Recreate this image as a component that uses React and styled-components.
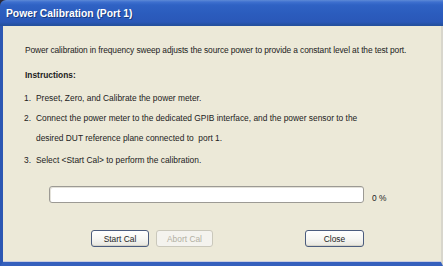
import React from "react";
import styled, { createGlobalStyle } from "styled-components";

const Global = createGlobalStyle`
  html, body { margin: 0; padding: 0; background: #2a2a3a; }
  body { width: 443px; height: 266px; overflow: hidden; }
`;

const Window = styled.div`
  width: 443px;
  height: 266px;
  display: flex;
  flex-direction: column;
  font-family: "Liberation Sans", Arial, sans-serif;
  overflow: hidden;
`;

const TitleBar = styled.div`
  height: 26px;
  flex: none;
  display: flex;
  align-items: center;
  padding-left: 6px;
  box-sizing: border-box;
  border-top-left-radius: 6px;
  background: linear-gradient(
    to bottom,
    #5d8ad6 0px,
    #3e70cf 2px,
    #2f62c4 5px,
    #2b5cbd 14px,
    #2a58b8 22px,
    #24509f 25px,
    #24509f 26px
  );
`;

const Title = styled.span`
  color: #ffffff;
  font-weight: bold;
  font-size: 10.3px;
  text-shadow: 1px 1px 0 #1a3c80;
  margin-top: 1px;
`;

const Body = styled.div`
  flex: 1;
  display: flex;
  flex-direction: column;
  background: #ece9d8;
  border-left: 3px solid #2c57b3;
  border-right: 2px solid #d8d6cc;
  border-bottom: 4px solid #3560bd;
  box-shadow: inset 0 -1px 0 #c8cbe0;
  padding: 19px 0 0 22px;
  color: #222222;
  font-size: 8.4px;
`;

const Paragraph = styled.div`
  line-height: 10px;
  white-space: nowrap;
  letter-spacing: -0.1px;
`;

const Heading = styled.div`
  line-height: 10px;
  font-weight: bold;
  margin-top: 15px;
  white-space: nowrap;
`;

const List = styled.div`
  margin-top: 8px;
  display: flex;
  flex-direction: column;
`;

const Item = styled.div`
  display: flex;
  line-height: 20px;
  margin-top: ${(p) => p.$gap || 0}px;
  white-space: nowrap;
`;

const Num = styled.span`
  width: 12px;
  flex: none;
  margin-left: -1px;
`;

const ProgressRow = styled.div`
  display: flex;
  align-items: center;
  margin-top: 16px;
  margin-left: 24px;
  gap: 8px;
`;

const ProgressBox = styled.div`
  width: 315px;
  height: 17px;
  box-sizing: border-box;
  background: #ffffff;
  border: 1px solid #9c9a94;
  border-radius: 3px;
  box-shadow: inset 1px 1px 0 #e4e2da;
`;

const Percent = styled.span`
  font-size: 8.4px;
  margin-top: 6px;
`;

const ButtonRow = styled.div`
  display: flex;
  margin-top: 27px;
  margin-left: 66px;
  width: 273px;
  gap: 7px;
`;

const Button = styled.div`
  width: ${(p) => p.$w}px;
  height: 17px;
  box-sizing: border-box;
  display: flex;
  align-items: center;
  justify-content: center;
  border-radius: 3px;
  font-size: 8.4px;
  margin-left: ${(p) => (p.$push ? "auto" : "0")};
  border: 1px solid ${(p) => (p.$disabled ? "#cac8bb" : "#4b5c7e")};
  color: ${(p) => (p.$disabled ? "#b2b0a2" : "#1e1e1e")};
  background: ${(p) =>
    p.$disabled
      ? "#f4f3ee"
      : "linear-gradient(to bottom, #ffffff 0%, #f7f7f4 50%, #e7e6df 100%)"};
  box-shadow: ${(p) =>
    p.$disabled ? "none" : "inset 0 -1px 0 #d6d4c8"};
`;

export default function App() {
  return (
    <>
      <Global />
      <Window>
        <TitleBar>
          <Title>Power Calibration (Port 1)</Title>
        </TitleBar>
        <Body>
          <Paragraph>
            Power calibration in frequency sweep adjusts the source power to
            provide a constant level at the test port.
          </Paragraph>
          <Heading>Instructions:</Heading>
          <List>
            <Item>
              <Num>1.</Num>
              <span>Preset, Zero, and Calibrate the power meter.</span>
            </Item>
            <Item>
              <Num>2.</Num>
              <span>
                Connect the power meter to the dedicated GPIB interface, and the
                power sensor to the
              </span>
            </Item>
            <Item>
              <Num />
              <span>desired DUT reference plane connected to&nbsp; port 1.</span>
            </Item>
            <Item $gap={2}>
              <Num>3.</Num>
              <span>Select &lt;Start Cal&gt; to perform the calibration.</span>
            </Item>
          </List>
          <ProgressRow>
            <ProgressBox />
            <Percent>0 %</Percent>
          </ProgressRow>
          <ButtonRow>
            <Button $w={58}>Start Cal</Button>
            <Button $w={57} $disabled>
              Abort Cal
            </Button>
            <Button $w={59} $push>
              Close
            </Button>
          </ButtonRow>
        </Body>
      </Window>
    </>
  );
}
